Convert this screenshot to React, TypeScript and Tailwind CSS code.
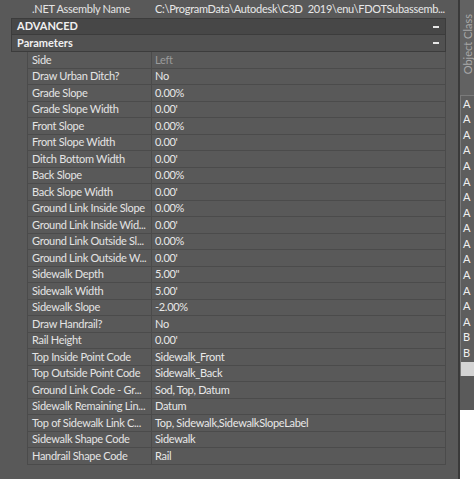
const rows: [string, string][] = [
  ["Side", "Left"],
  ["Draw Urban Ditch?", "No"],
  ["Grade Slope", "0.00%"],
  ["Grade Slope Width", "0.00'"],
  ["Front Slope", "0.00%"],
  ["Front Slope Width", "0.00'"],
  ["Ditch Bottom Width", "0.00'"],
  ["Back Slope", "0.00%"],
  ["Back Slope Width", "0.00'"],
  ["Ground Link Inside Slope", "0.00%"],
  ["Ground Link Inside Wid...", "0.00'"],
  ["Ground Link Outside Sl...", "0.00%"],
  ["Ground Link Outside W...", "0.00'"],
  ["Sidewalk Depth", "5.00\""],
  ["Sidewalk Width", "5.00'"],
  ["Sidewalk Slope", "-2.00%"],
  ["Draw Handrail?", "No"],
  ["Rail Height", "0.00'"],
  ["Top Inside Point Code", "Sidewalk_Front"],
  ["Top Outside Point Code", "Sidewalk_Back"],
  ["Ground Link Code - Gr...", "Sod, Top, Datum"],
  ["Sidewalk Remaining Lin...", "Datum"],
  ["Top of Sidewalk Link C...", "Top, Sidewalk,SidewalkSlopeLabel"],
  ["Sidewalk Shape Code", "Sidewalk"],
  ["Handrail Shape Code", "Rail"],
];

const classes = [..."AAAAAAAAAAAAAAA", "B", "B"];

function Minus() {
  return <span className="mr-[6px] block h-[2px] w-[6px] bg-[#e6e6e6]" />;
}

function Row({ name, value, dim }: { name: string; value: string; dim?: boolean }) {
  return (
    <div className="flex h-[16.5px] shrink-0">
      <div className="w-[28px] shrink-0 border-r border-[#4b4b4b]" />
      <div className="flex w-[124px] shrink-0 items-center overflow-hidden whitespace-nowrap border-b border-r border-[#4b4b4b] pl-[4px] text-[#e4e4e4]">
        {name}
      </div>
      <div
        className={`flex flex-1 items-center overflow-hidden whitespace-nowrap border-b border-r border-[#4b4b4b] pl-[3px] ${dim ? "text-[#9b9b9b]" : "text-[#e8e8e8]"}`}
      >
        {value}
      </div>
    </div>
  );
}

export default function App() {
  return (
    <div
      className="flex h-[479px] w-[474px] overflow-hidden bg-[#595959] text-[11px] tracking-[-0.3px]"
      style={{ fontFamily: '"Lato", "Liberation Sans", sans-serif' }}
    >
      <div className="flex w-[458px] shrink-0 flex-col pr-[12px]">
        <div className="flex h-[18px] shrink-0">
          <div className="w-[28px] shrink-0" />
          <div className="flex w-[124px] shrink-0 items-center whitespace-nowrap pl-[4px] text-[#e4e4e4]">
            .NET Assembly Name
          </div>
          <div className="flex flex-1 items-center overflow-hidden whitespace-nowrap pl-[3px] text-[#e8e8e8]">
            C:\ProgramData\Autodesk\C3D&nbsp; 2019\enu\FDOTSubassemb...
          </div>
        </div>
        <div className="ml-[11px] flex h-[17px] shrink-0 items-center justify-between border border-[#3c3c3c] bg-[#474747] pl-[5px] font-bold tracking-normal text-[#f0f0f0]">
          ADVANCED
          <Minus />
        </div>
        <div className="ml-[11px] flex h-[17px] shrink-0 items-center justify-between border border-t-0 border-[#3c3c3c] bg-[#515151] pl-[5px] font-bold tracking-normal text-[#f0f0f0]">
          Parameters
          <Minus />
        </div>
        {rows.map(([n, v], i) => (
          <Row key={n} name={n} value={v} dim={i === 0} />
        ))}
      </div>
      <div className="w-[2px] shrink-0 bg-[#3a3a3a]" />
      <div className="flex flex-1 flex-col bg-[#5e5e5e]">
        <div className="flex h-[95px] shrink-0 items-start justify-center bg-[#626262] pt-[14px]">
          <span
            className="whitespace-nowrap text-[11px] tracking-normal text-[#a8a8a8]"
            style={{ writingMode: "vertical-rl", transform: "rotate(180deg)" }}
          >
            Object Class
          </span>
        </div>
        <div className="flex flex-col border-l border-t border-[#7a7a7a]">
          {classes.map((c, i) => (
            <div key={i} className="flex h-[15.6px] items-center pl-[2px] text-[11px] tracking-normal text-[#f0f0f0]">
              {c}
            </div>
          ))}
          <div className="mt-[1px] h-[14px] bg-[#d4d4d4]" />
        </div>
        <div className="h-[34px] bg-[#5a5a5a]" />
        <div className="flex-1 bg-white" />
      </div>
    </div>
  );
}
